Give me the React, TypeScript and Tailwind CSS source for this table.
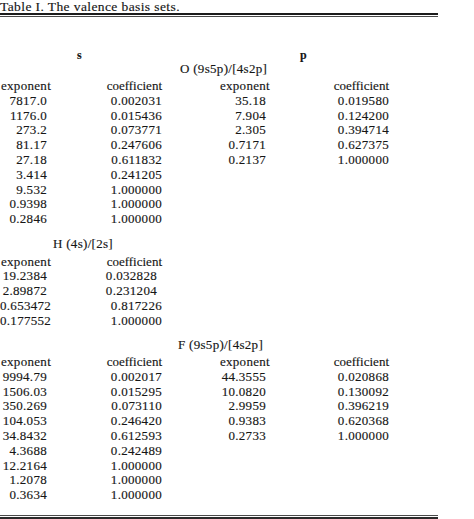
const sRows = [
  ["7817.0", "0.002031"],
  ["1176.0", "0.015436"],
  ["273.2", "0.073771"],
  ["81.17", "0.247606"],
  ["27.18", "0.611832"],
  ["3.414", "0.241205"],
  ["9.532", "1.000000"],
  ["0.9398", "1.000000"],
  ["0.2846", "1.000000"],
];

const pRows = [
  ["35.18", "0.019580"],
  ["7.904", "0.124200"],
  ["2.305", "0.394714"],
  ["0.7171", "0.627375"],
  ["0.2137", "1.000000"],
];

const hRows = [
  ["19.2384", "0.032828"],
  ["2.89872", "0.231204"],
  ["0.653472", "0.817226"],
  ["0.177552", "1.000000"],
];

const fsRows = [
  ["9994.79", "0.002017"],
  ["1506.03", "0.015295"],
  ["350.269", "0.073110"],
  ["104.053", "0.246420"],
  ["34.8432", "0.612593"],
  ["4.3688", "0.242489"],
  ["12.2164", "1.000000"],
  ["1.2078", "1.000000"],
  ["0.3634", "1.000000"],
];

const fpRows = [
  ["44.3555", "0.020868"],
  ["10.0820", "0.130092"],
  ["2.9959", "0.396219"],
  ["0.9383", "0.620368"],
  ["0.2733", "1.000000"],
];

const cols = "grid grid-cols-[47px_115px_104px_123px] items-center";

function Header({ right = true }: { right?: boolean }) {
  return (
    <div className={`${cols} h-[14.8px]`}>
      <div className="whitespace-nowrap pl-[1px]">exponent</div>
      <div className="text-right whitespace-nowrap tracking-normal">coefficient</div>
      <div className="text-right whitespace-nowrap -mr-[4px]">{right ? "exponent" : ""}</div>
      <div className="text-right whitespace-nowrap tracking-normal">{right ? "coefficient" : ""}</div>
    </div>
  );
}

function Block({ left, right, shift = [] }: { left: string[][]; right: string[][]; shift?: number[] }) {
  return (
    <div>
      {left.map((l, i) => (
        <div key={i} className={`${cols} h-[14.8px]`}>
          <div className="text-right whitespace-nowrap">{l[0]}</div>
          <div className={`text-right whitespace-nowrap ${shift.includes(i) ? "pr-[5px]" : ""}`}>{l[1]}</div>
          <div className="text-right whitespace-nowrap">{right[i] ? right[i][0] : ""}</div>
          <div className="text-right whitespace-nowrap">{right[i] ? right[i][1] : ""}</div>
        </div>
      ))}
    </div>
  );
}

export default function App() {
  return (
    <div
      className="w-[474px] h-[519px] overflow-hidden bg-white text-[#161616] text-[13px] tracking-[0.3px] [-webkit-text-stroke:0.15px_#161616]"
      style={{ fontFamily: '"Liberation Serif", "Times New Roman", serif' }}
    >
      <div className="h-[13px] leading-[13px] text-[13.5px] tracking-[0.4px] whitespace-nowrap">
        Table I. The valence basis sets.
      </div>
      <div className="w-[438px]">
        <div className="h-[2px] bg-[#1c1c1c]" />
        <div className="h-[1px]" />
        <div className="h-[1px] bg-[#4a4a4a]" />
      </div>

      <div className="h-[30px]" />

      {/* column labels */}
      <div className="h-[15px] flex items-center font-bold text-[12px]">
        <div className="w-[77px]" />
        <div>s</div>
        <div className="w-[218px]" />
        <div>p</div>
      </div>

      {/* O block */}
      <div className="h-[14px] flex items-center">
        <div className="w-[180px]" />
        <div className="whitespace-nowrap">O (9s5p)/[4s2p]</div>
      </div>
      <Header />
      <Block left={sRows} right={pRows} />

      {/* H block */}
      <div className="h-[12.8px]" />
      <div className="h-[14.8px] flex items-center">
        <div className="w-[53px]" />
        <div className="whitespace-nowrap">H (4s)/[2s]</div>
      </div>
      <Header right={false} />
      <Block left={hRows} right={[]} shift={[0, 1]} />

      {/* F block */}
      <div className="h-[11.7px]" />
      <div className="h-[14.8px] flex items-center">
        <div className="w-[178px]" />
        <div className="whitespace-nowrap">F (9s5p)/[4s2p]</div>
      </div>
      <Header />
      <Block left={fsRows} right={fpRows} />

      <div className="h-[15px]" />
      <div className="w-[438px]">
        <div className="h-[1px] bg-[#4a4a4a]" />
        <div className="h-[1px]" />
        <div className="h-[3px] bg-[#2a2a2a]" />
      </div>
    </div>
  );
}
